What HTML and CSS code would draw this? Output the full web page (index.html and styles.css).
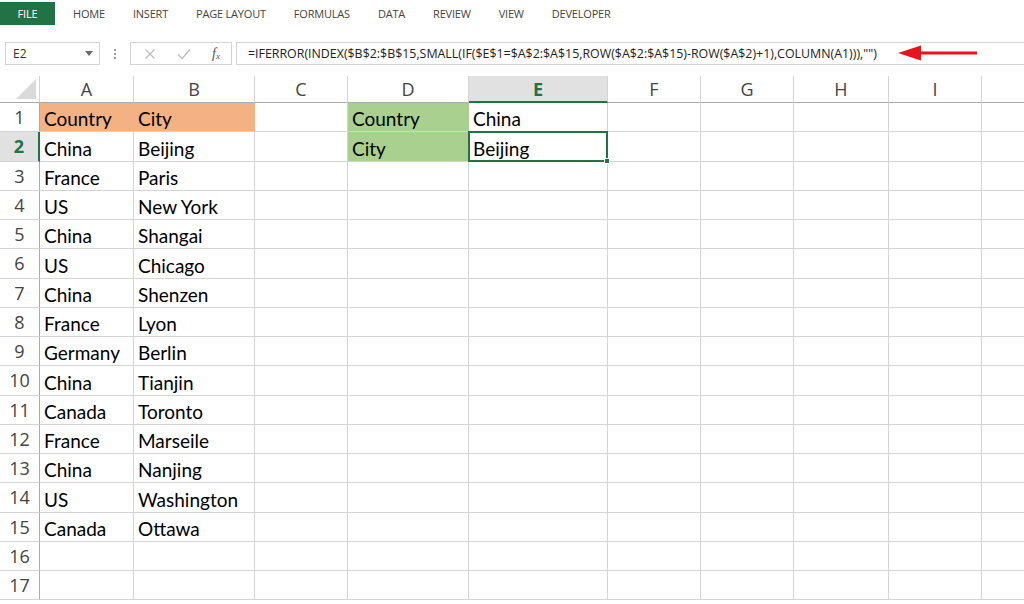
FILE: index.html
```html
<!DOCTYPE html>
<html>
<head>
<meta charset="utf-8">
<link rel="stylesheet" href="styles.css">
</head>
<body>
<div class="app">
  <div class="ribbon">
    <span class="tab file">FILE</span>
    <span class="tab">HOME</span>
    <span class="tab">INSERT</span>
    <span class="tab">PAGE LAYOUT</span>
    <span class="tab">FORMULAS</span>
    <span class="tab">DATA</span>
    <span class="tab">REVIEW</span>
    <span class="tab">VIEW</span>
    <span class="tab">DEVELOPER</span>
  </div>

  <div class="fbar">
    <div class="namebox">
      <span class="nb-text">E2</span>
      <svg class="nb-arrow" width="8" height="5" viewBox="0 0 8 5"><path d="M0 0H8L4 5Z" fill="#6b6b6b"/></svg>
    </div>
    <div class="grip"><i></i><i></i><i></i></div>
    <div class="btns">
      <svg class="ico" width="12" height="12" viewBox="0 0 12 12"><path d="M1.5 1.5L10.5 10.5M10.5 1.5L1.5 10.5" stroke="#bdbdbd" stroke-width="1.3" fill="none"/></svg>
      <svg class="ico" width="14" height="12" viewBox="0 0 14 12"><path d="M1 6.5L5 10.5L13 1.5" stroke="#bdbdbd" stroke-width="1.4" fill="none"/></svg>
      <span class="fx">f<sub>x</sub></span>
    </div>
    <div class="formula">
      <span class="ftext">=IFERROR(INDEX($B$2:$B$15,SMALL(IF($E$1=$A$2:$A$15,ROW($A$2:$A$15)-ROW($A$2)+1),COLUMN(A1))),"")</span>
      <svg class="redarrow" width="84" height="18" viewBox="0 0 84 18"><path d="M20 7.5H80V10.5H20Z" fill="#e8141b"/><path d="M1 9L24 1.5V16.5Z" fill="#e8141b"/></svg>
    </div>
  </div>

  <div class="sheet">
    <div class="corner"><span class="tri"></span></div>
    <div class="ch">A</div><div class="ch">B</div><div class="ch">C</div><div class="ch">D</div><div class="ch sel">E</div><div class="ch">F</div><div class="ch">G</div><div class="ch">H</div><div class="ch">I</div><div class="ch last"></div>

    <div class="rh">1</div><div class="c org">Country</div><div class="c org">City</div><div class="c"></div><div class="c grn">Country</div><div class="c">China</div><div class="c"></div><div class="c"></div><div class="c"></div><div class="c"></div><div class="c"></div>
    <div class="rh sel">2</div><div class="c">China</div><div class="c">Beijing</div><div class="c"></div><div class="c grn">City</div><div class="c active">Beijing<span class="selbox"><span class="handle"></span></span></div><div class="c"></div><div class="c"></div><div class="c"></div><div class="c"></div><div class="c"></div>
    <div class="rh">3</div><div class="c">France</div><div class="c">Paris</div><div class="c"></div><div class="c"></div><div class="c"></div><div class="c"></div><div class="c"></div><div class="c"></div><div class="c"></div><div class="c"></div>
    <div class="rh">4</div><div class="c">US</div><div class="c">New York</div><div class="c"></div><div class="c"></div><div class="c"></div><div class="c"></div><div class="c"></div><div class="c"></div><div class="c"></div><div class="c"></div>
    <div class="rh">5</div><div class="c">China</div><div class="c">Shangai</div><div class="c"></div><div class="c"></div><div class="c"></div><div class="c"></div><div class="c"></div><div class="c"></div><div class="c"></div><div class="c"></div>
    <div class="rh">6</div><div class="c">US</div><div class="c">Chicago</div><div class="c"></div><div class="c"></div><div class="c"></div><div class="c"></div><div class="c"></div><div class="c"></div><div class="c"></div><div class="c"></div>
    <div class="rh">7</div><div class="c">China</div><div class="c">Shenzen</div><div class="c"></div><div class="c"></div><div class="c"></div><div class="c"></div><div class="c"></div><div class="c"></div><div class="c"></div><div class="c"></div>
    <div class="rh">8</div><div class="c">France</div><div class="c">Lyon</div><div class="c"></div><div class="c"></div><div class="c"></div><div class="c"></div><div class="c"></div><div class="c"></div><div class="c"></div><div class="c"></div>
    <div class="rh">9</div><div class="c">Germany</div><div class="c">Berlin</div><div class="c"></div><div class="c"></div><div class="c"></div><div class="c"></div><div class="c"></div><div class="c"></div><div class="c"></div><div class="c"></div>
    <div class="rh">10</div><div class="c">China</div><div class="c">Tianjin</div><div class="c"></div><div class="c"></div><div class="c"></div><div class="c"></div><div class="c"></div><div class="c"></div><div class="c"></div><div class="c"></div>
    <div class="rh">11</div><div class="c">Canada</div><div class="c">Toronto</div><div class="c"></div><div class="c"></div><div class="c"></div><div class="c"></div><div class="c"></div><div class="c"></div><div class="c"></div><div class="c"></div>
    <div class="rh">12</div><div class="c">France</div><div class="c">Marseile</div><div class="c"></div><div class="c"></div><div class="c"></div><div class="c"></div><div class="c"></div><div class="c"></div><div class="c"></div><div class="c"></div>
    <div class="rh">13</div><div class="c">China</div><div class="c">Nanjing</div><div class="c"></div><div class="c"></div><div class="c"></div><div class="c"></div><div class="c"></div><div class="c"></div><div class="c"></div><div class="c"></div>
    <div class="rh">14</div><div class="c">US</div><div class="c">Washington</div><div class="c"></div><div class="c"></div><div class="c"></div><div class="c"></div><div class="c"></div><div class="c"></div><div class="c"></div><div class="c"></div>
    <div class="rh">15</div><div class="c">Canada</div><div class="c">Ottawa</div><div class="c"></div><div class="c"></div><div class="c"></div><div class="c"></div><div class="c"></div><div class="c"></div><div class="c"></div><div class="c"></div>
    <div class="rh">16</div><div class="c"></div><div class="c"></div><div class="c"></div><div class="c"></div><div class="c"></div><div class="c"></div><div class="c"></div><div class="c"></div><div class="c"></div><div class="c"></div>
    <div class="rh">17</div><div class="c"></div><div class="c"></div><div class="c"></div><div class="c"></div><div class="c"></div><div class="c"></div><div class="c"></div><div class="c"></div><div class="c"></div><div class="c"></div>
  </div>
</div>
</body>
</html>
```

FILE: styles.css
```css
* { box-sizing: border-box; }
html, body { margin: 0; padding: 0; background: #fff; }
body { width: 1024px; height: 604px; overflow: hidden; font-family: "Open Sans", "Noto Sans", sans-serif; }

.ribbon {
  display: flex;
  align-items: flex-start;
  height: 28px;
  padding-top: 2px;
}
.tab {
  font-size: 11px;
  color: #444;
  padding: 0 14px;
  line-height: 23px;
  letter-spacing: -0.2px;
}
.tab.file {
  background: #217346;
  color: #fff;
  width: 55px;
  padding: 0;
  text-align: center;
  margin-right: 4px;
}

.fbar {
  display: flex;
  align-items: stretch;
  height: 23px;
  margin-top: 14px;
  padding-left: 5px;
}
.namebox {
  width: 95px;
  border: 1px solid #d4d4d4;
  display: flex;
  align-items: center;
  justify-content: space-between;
  padding: 0 6px 0 7px;
}
.nb-text { font-size: 12px; color: #333; }
.grip {
  width: 30px;
  display: flex;
  flex-direction: column;
  align-items: center;
  justify-content: center;
  gap: 2px;
}
.grip i { width: 2px; height: 2px; background: #9a9a9a; display: block; }
.btns {
  width: 102px;
  border: 1px solid #d4d4d4;
  display: flex;
  align-items: center;
  justify-content: space-between;
  padding: 0 11px 0 13px;
}
.fx {
  font-family: "Liberation Serif", serif;
  font-style: italic;
  font-size: 14px;
  color: #555;
  line-height: 1;
}
.fx sub { font-size: 9px; vertical-align: -1px; }
.formula {
  flex: 1;
  margin-left: 4px;
  border: 1px solid #d4d4d4;
  border-right: none;
  display: flex;
  align-items: center;
  padding-left: 11px;
  position: relative;
}
.ftext { font-size: 12.4px; color: #222; white-space: nowrap; }
.redarrow { position: absolute; left: 660px; top: 1px; }

.sheet {
  margin-top: 11px;
  display: grid;
  grid-template-columns: 40px 94px 121px 93px 121px 139px 93px 93px 95px 93px 1fr;
  grid-template-rows: 27px repeat(17, 29.25px);
}
.corner {
  position: relative;
  border-right: 1px solid #d4d4d4;
  border-bottom: 1px solid #ababab;
}
.tri {
  position: absolute;
  right: 3px;
  bottom: 3px;
  width: 0; height: 0;
  border-left: 20px solid transparent;
  border-bottom: 20px solid #dadada;
}
.ch {
  border-right: 1px solid #d4d4d4;
  border-bottom: 1px solid #ababab;
  text-align: center;
  font-size: 18px;
  line-height: 27px;
  color: #444;
}
.ch.last { border-right: none; }
.ch.sel {
  background: #e1e1e1;
  color: #217346;
  font-weight: bold;
  border-bottom: 2px solid #217346;
}
.rh {
  border-right: 1px solid #ababab;
  border-bottom: 1px solid #d4d4d4;
  text-align: center;
  font-size: 18px;
  line-height: 29px;
  color: #444;
}
.rh.sel {
  background: #e1e1e1;
  color: #217346;
  font-weight: bold;
  border-right: 2px solid #217346;
}
.c {
  border-right: 1px solid #d4d4d4;
  border-bottom: 1px solid #d4d4d4;
  font-family: "Lato", "Open Sans", sans-serif;
  font-size: 19px;
  color: #000;
  padding: 0 4px;
  display: flex;
  align-items: flex-end;
  padding-bottom: 1px;
  white-space: nowrap;
}
.c:nth-child(11n) { border-right: none; }
.c.org { background: #f4b183; border-right-color: #f4b183; }
.c.grn { background: #a9d08e; border-right-color: #a9d08e; }
.c.active { position: relative; }
.selbox {
  position: absolute;
  left: -1px; top: -1px; right: -1px; bottom: -1px;
  border: 2px solid #217346;
}
.handle {
  position: absolute;
  right: -4px;
  bottom: -4px;
  width: 6px; height: 6px;
  background: #217346;
  border: 1px solid #fff;
}
```
